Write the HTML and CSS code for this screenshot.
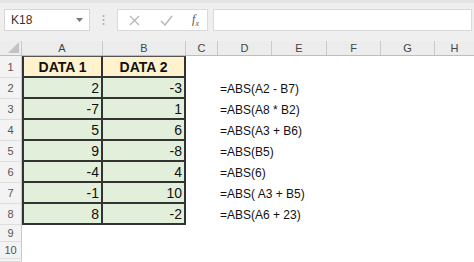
FILE: index.html
```html
<!DOCTYPE html>
<html lang="en">
<head>
    <meta charset="UTF-8">
    <meta name="viewport" content="width=device-width, initial-scale=1.0">
    <title>ABS Function</title>
    <link rel="stylesheet" href="styles.css">
</head>
<body>
    <div class="formula-bar">
        <div class="name-box">
            <span>K18</span>
            <svg class="caret" width="7" height="4" viewBox="0 0 7 4"><path d="M0 0h7L3.5 4z" fill="#777"/></svg>
        </div>
        <div class="grip">
            <svg width="3" height="12" viewBox="0 0 3 12"><circle cx="1.5" cy="2" r="1" fill="#aaa"/><circle cx="1.5" cy="6" r="1" fill="#aaa"/><circle cx="1.5" cy="10" r="1" fill="#aaa"/></svg>
        </div>
        <div class="fx-box">
            <svg width="11" height="11" viewBox="0 0 11 11"><path d="M1 1l9 9M10 1l-9 9" stroke="#b5b5b5" stroke-width="1.3"/></svg>
            <svg width="13" height="11" viewBox="0 0 13 11"><path d="M1 6l4 4 7-9" stroke="#b5b5b5" stroke-width="1.4" fill="none"/></svg>
            <span class="fx">f<sub>x</sub></span>
        </div>
        <div class="formula-input"></div>
    </div>

    <div class="sheet">
        <div class="row head">
            <div class="corner"><svg width="11" height="11" viewBox="0 0 11 11"><path d="M11 0v11H0z" fill="#c3c3c3"/></svg></div>
            <div class="col">A</div>
            <div class="col">B</div>
            <div class="col">C</div>
            <div class="col">D</div>
            <div class="col">E</div>
            <div class="col">F</div>
            <div class="col">G</div>
            <div class="col last">H</div>
        </div>

        <div class="row first">
            <div class="num">1</div>
            <div class="cell title a">DATA 1</div>
            <div class="cell title b">DATA 2</div>
        </div>
        <div class="row">
            <div class="num">2</div>
            <div class="cell val a">2</div>
            <div class="cell val b">-3</div>
            <div></div>
            <div class="formula">=ABS(A2 - B7)</div>
        </div>
        <div class="row">
            <div class="num">3</div>
            <div class="cell val a">-7</div>
            <div class="cell val b">1</div>
            <div></div>
            <div class="formula">=ABS(A8 * B2)</div>
        </div>
        <div class="row">
            <div class="num">4</div>
            <div class="cell val a">5</div>
            <div class="cell val b">6</div>
            <div></div>
            <div class="formula">=ABS(A3 + B6)</div>
        </div>
        <div class="row">
            <div class="num">5</div>
            <div class="cell val a">9</div>
            <div class="cell val b">-8</div>
            <div></div>
            <div class="formula">=ABS(B5)</div>
        </div>
        <div class="row">
            <div class="num">6</div>
            <div class="cell val a">-4</div>
            <div class="cell val b">4</div>
            <div></div>
            <div class="formula">=ABS(6)</div>
        </div>
        <div class="row">
            <div class="num">7</div>
            <div class="cell val a">-1</div>
            <div class="cell val b">10</div>
            <div></div>
            <div class="formula">=ABS( A3 + B5)</div>
        </div>
        <div class="row">
            <div class="num">8</div>
            <div class="cell val a">8</div>
            <div class="cell val b">-2</div>
            <div></div>
            <div class="formula">=ABS(A6 + 23)</div>
        </div>
        <div class="row short">
            <div class="num">9</div>
        </div>
        <div class="row short">
            <div class="num">10</div>
        </div>
        <div class="row tail">
            <div class="num"></div>
        </div>
    </div>
</body>
</html>
```

FILE: styles.css
```css
* {
    margin: 0;
    padding: 0;
    box-sizing: border-box;
}

body {
    width: 474px;
    height: 262px;
    overflow: hidden;
    background: #ffffff;
    font-family: 'Liberation Sans', Arial, sans-serif;
    color: #111;
}

/* formula bar */
.formula-bar {
    height: 41px;
    background: #efefef;
    border-top: 3px solid #e4e4e4;
    display: flex;
    align-items: flex-start;
    padding: 6px 2px 0 4px;
}

.name-box {
    width: 86px;
    height: 22px;
    background: #fff;
    border: 1px solid #d6d6d6;
    display: flex;
    align-items: center;
    justify-content: space-between;
    padding: 0 6px 0 6px;
    font-size: 12px;
    color: #333;
}

.grip {
    width: 27px;
    height: 22px;
    display: flex;
    align-items: center;
    justify-content: center;
}

.fx-box {
    width: 91px;
    height: 22px;
    background: #fff;
    border: 1px solid #dadada;
    display: flex;
    align-items: center;
    justify-content: space-between;
    padding: 0 8px 0 11px;
}

.fx {
    font-family: 'Liberation Serif', serif;
    font-style: italic;
    font-size: 12px;
    color: #555;
}

.fx sub {
    font-size: 8px;
}

.formula-input {
    flex: 1;
    height: 22px;
    margin-left: 5px;
    background: #fff;
    border: 1px solid #dadada;
}

/* sheet */
.sheet {
    display: flex;
    flex-direction: column;
}

.row {
    display: grid;
    grid-template-columns: 22px 81px 83px 32px 54px 55px 54px 54px 39px;
    height: 21px;
}

.row.head {
    height: 15px;
    background: #ececec;
    border-bottom: 1px solid #bdbdbd;
}

.row.first {
    height: 22px;
}

.row.short {
    height: 17px;
}

.row.tail {
    height: 3px;
}

.corner {
    display: flex;
    align-items: flex-end;
    justify-content: flex-end;
    padding: 0 2px 2px 0;
    border-right: 1px solid #c9c9c9;
}

.col {
    font-size: 11px;
    color: #444;
    text-align: center;
    line-height: 14px;
    border-right: 1px solid #cbcbcb;
}

.col.last {
    border-right: none;
}

.num {
    font-size: 11px;
    color: #555;
    background: #f3f3f3;
    border-right: 1px solid #c9c9c9;
    border-bottom: 1px solid #dedede;
    display: flex;
    align-items: center;
    justify-content: center;
}

.cell {
    display: flex;
    align-items: center;
    border-bottom: 2px solid #333;
    font-size: 14px;
}

.cell.a {
    border-left: 2px solid #333;
    border-right: 2px solid #333;
}

.cell.b {
    border-right: 2px solid #333;
}

.title {
    background: #fff2cc;
    justify-content: center;
    font-weight: bold;
    border-top: 1px solid #555;
}

.val {
    background: #e2efda;
    justify-content: flex-end;
    padding-right: 2px;
}

.formula {
    font-size: 12px;
    white-space: nowrap;
    padding-left: 2px;
    display: flex;
    align-items: center;
}
```
